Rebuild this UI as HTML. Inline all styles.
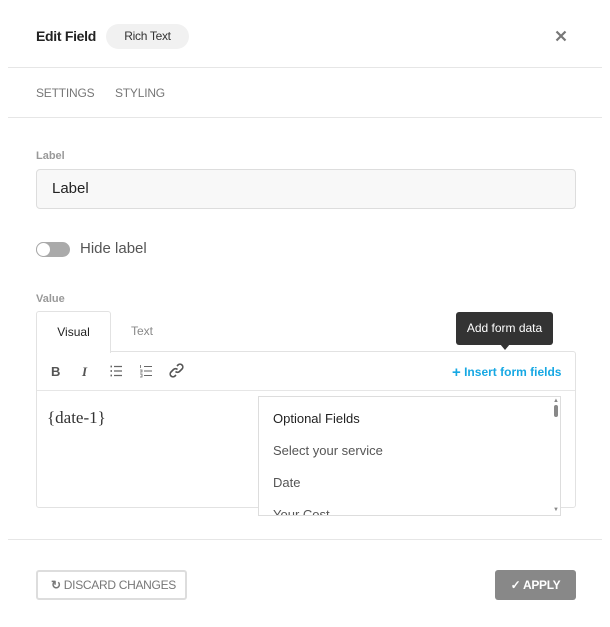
<!DOCTYPE html>
<html><head><style>
*{box-sizing:border-box;margin:0;padding:0}
body{width:610px;height:627px;background:#fff;font-family:"Liberation Sans",sans-serif;position:relative;overflow:hidden;color:#333}
.a{position:absolute}
.hr{position:absolute;left:8px;width:594px;height:1px;background:#e6e6e6}
</style></head><body>
<div class="a" style="left:36px;top:28px;font-size:14px;font-weight:bold;color:#222;letter-spacing:-0.3px">Edit Field</div>
<div class="a" style="left:106px;top:24px;width:83px;height:25px;border-radius:13px;background:#f1f1f1;font-size:12px;line-height:25px;text-align:center;color:#333;letter-spacing:-0.3px">Rich Text</div>
<svg class="a" style="left:555px;top:30px" width="12" height="12" viewBox="0 0 12 12"><path d="M1.5 1.5L10.5 10.5M10.5 1.5L1.5 10.5" stroke="#777" stroke-width="2.2"/></svg>
<div class="hr" style="top:67px"></div>
<div class="a" style="left:36px;top:86px;font-size:12px;color:#777;letter-spacing:-0.2px">SETTINGS</div>
<div class="a" style="left:115px;top:86px;font-size:12px;color:#777;letter-spacing:-0.2px">STYLING</div>
<div class="hr" style="top:117px"></div>
<div class="a" style="left:36px;top:150px;font-size:11px;color:#999;font-weight:bold">Label</div>
<div class="a" style="left:36px;top:169px;width:540px;height:40px;background:#f8f8f8;border:1px solid #ddd;border-radius:4px;font-size:15px;line-height:38px;padding-left:15px;color:#222">Label</div>
<div class="a" style="left:36px;top:242px;width:34px;height:15px;border-radius:8px;background:#aaa"></div>
<div class="a" style="left:36px;top:242px;width:15px;height:15px;border-radius:8px;background:#fff;border:1px solid #aaa"></div>
<div class="a" style="left:80px;top:240px;font-size:15px;color:#555">Hide label</div>
<div class="a" style="left:36px;top:293px;font-size:11px;color:#999;font-weight:bold">Value</div>
<div class="a" style="left:36px;top:351px;width:540px;height:157px;border:1px solid #e2e2e2;border-radius:3px"></div>
<div class="a" style="left:36px;top:311px;width:75px;height:42px;border:1px solid #e2e2e2;border-bottom:none;background:#fff;border-radius:3px 3px 0 0;font-size:12px;line-height:40px;text-align:center;color:#222">Visual</div>
<div class="a" style="left:131px;top:324px;font-size:12px;color:#888">Text</div>
<div class="a" style="left:37px;top:390px;width:538px;height:1px;background:#e6e6e6"></div>
<div class="a" style="left:51px;top:364px;font-size:13px;font-weight:bold;color:#555">B</div>
<div class="a" style="left:82px;top:364px;font-size:13px;font-style:italic;font-family:'Liberation Serif',serif;font-weight:bold;color:#555">I</div>
<svg class="a" style="left:109px;top:364px" width="14" height="14" viewBox="0 0 14 14" stroke="#666" stroke-width="1.2"><path d="M5 2.5H13M5 7H13M5 11.5H13"/><path d="M1.5 2.5h1.5M1.5 7h1.5M1.5 11.5h1.5" stroke-width="1.8"/></svg>
<svg class="a" style="left:139px;top:364px" width="14" height="14" viewBox="0 0 14 14" stroke="#666" stroke-width="1.1" fill="none"><path d="M5 2.5H13M5 7H13M5 11.5H13"/><path d="M1.5 1v3M1 6h2v2H1M1 10h2v3H1" stroke-width="0.8"/></svg>
<svg class="a" style="left:169px;top:363px" width="15" height="15" viewBox="0 0 15 15" stroke="#555" stroke-width="1.6" fill="none"><path d="M6.5 8.5a3 3 0 0 0 4 0l2.5-2.5a2.8 2.8 0 0 0-4-4L8 3"/><path d="M8.5 6.5a3 3 0 0 0-4 0L2 9a2.8 2.8 0 0 0 4 4l1-1"/></svg>
<div class="a" style="left:452px;top:363px;font-size:12px;color:#17a8e3;font-weight:bold"><span style="font-size:15px;position:relative;top:1px">+</span> Insert form fields</div>
<div class="a" style="left:456px;top:312px;width:97px;height:33px;background:#333;border-radius:3px;color:#fff;font-size:12px;line-height:33px;text-align:center">Add form data</div>
<div class="a" style="left:500px;top:344px;width:0;height:0;border-left:5px solid transparent;border-right:5px solid transparent;border-top:6px solid #333"></div>
<div class="a" style="left:47px;top:408px;font-family:'Liberation Serif',serif;font-size:17px;color:#333">{date-1}</div>
<div class="a" style="left:258px;top:396px;width:303px;height:120px;background:#fff;border:1px solid #ddd;overflow:hidden">
<div class="a" style="left:14px;top:14px;font-size:13px;color:#222">Optional Fields</div>
<div class="a" style="left:14px;top:46px;font-size:13px;color:#555">Select your service</div>
<div class="a" style="left:14px;top:78px;font-size:13px;color:#555">Date</div>
<div class="a" style="left:14px;top:110px;font-size:13px;color:#555">Your Cost</div>
<div class="a" style="left:295px;top:8px;width:4px;height:12px;background:#888;border-radius:2px"></div>
<div class="a" style="left:294px;top:1px;font-size:6px;color:#888">▲</div>
<div class="a" style="left:294px;top:110px;font-size:6px;color:#888">▼</div>
</div>
<div class="hr" style="top:539px"></div>
<div class="a" style="left:36px;top:570px;width:151px;height:30px;border:2px solid #ddd;border-radius:3px;font-size:12px;line-height:26px;color:#777;padding-left:13px;letter-spacing:-0.3px"><span style="font-weight:bold">↻</span> DISCARD CHANGES</div>
<div class="a" style="left:495px;top:570px;width:81px;height:30px;background:#888;border-radius:3px;font-size:12px;line-height:30px;color:#fff;text-align:center;font-weight:bold;letter-spacing:-0.3px">✓ APPLY</div>
</body></html>
